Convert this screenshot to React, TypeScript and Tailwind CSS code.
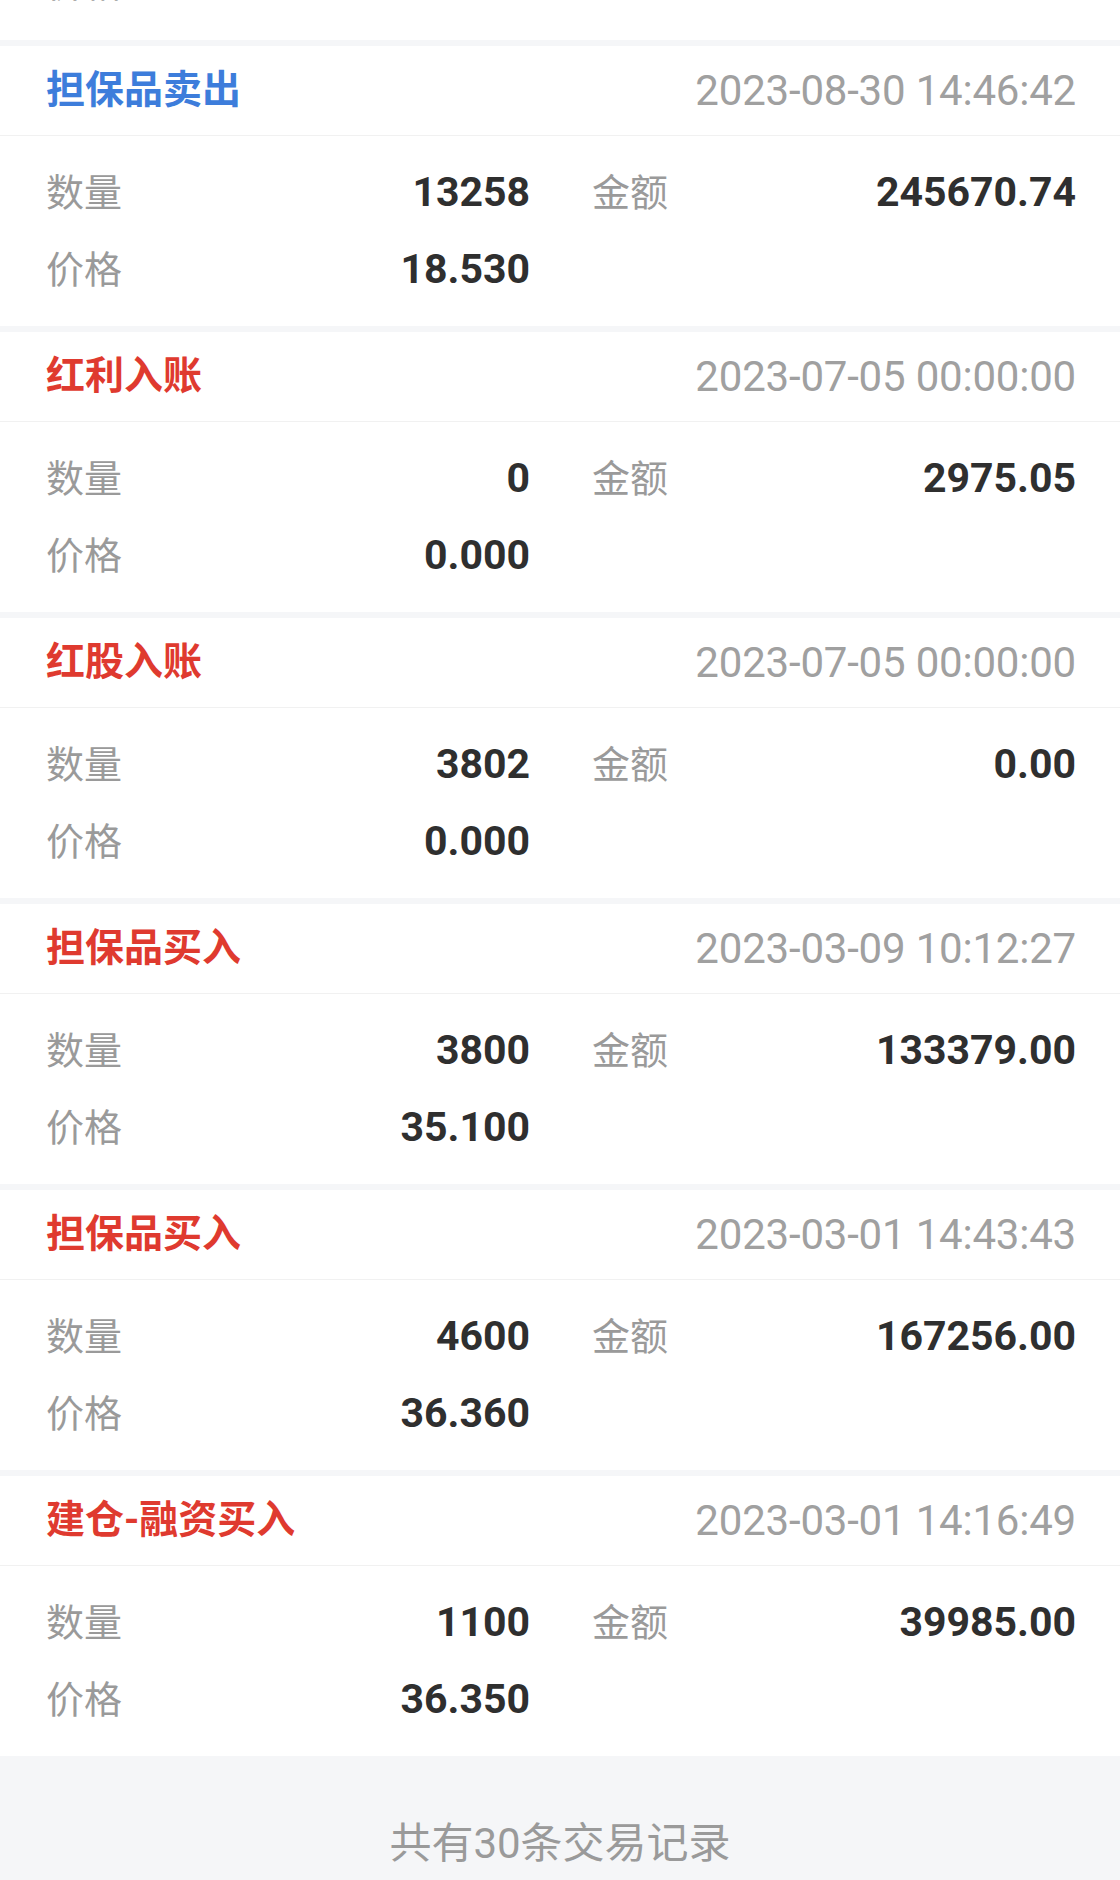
const records = [
  { title: "担保品买入", tone: "red", time: "2023-09-01 09:30:00", qty: "1000", amount: "18530.00", price: "18.530" },
  { title: "担保品卖出", tone: "blue", time: "2023-08-30 14:46:42", qty: "13258", amount: "245670.74", price: "18.530" },
  { title: "红利入账", tone: "red", time: "2023-07-05 00:00:00", qty: "0", amount: "2975.05", price: "0.000" },
  { title: "红股入账", tone: "red", time: "2023-07-05 00:00:00", qty: "3802", amount: "0.00", price: "0.000" },
  { title: "担保品买入", tone: "red", time: "2023-03-09 10:12:27", qty: "3800", amount: "133379.00", price: "35.100" },
  { title: "担保品买入", tone: "red", time: "2023-03-01 14:43:43", qty: "4600", amount: "167256.00", price: "36.360" },
  { title: "建仓-融资买入", tone: "red", time: "2023-03-01 14:16:49", qty: "1100", amount: "39985.00", price: "36.350" },
];

const cjk = "font-['Roboto','Noto_Sans_CJK_SC',sans-serif]";

function Field({ label, value }: { label: string; value: string }) {
  return (
    <div className="flex h-[77px] items-center justify-between">
      <span className="text-[38px] leading-none text-[#9a9a9a]">{label}</span>
      <span className="text-[41px] font-bold leading-none text-[#2f2f2f]">{value}</span>
    </div>
  );
}

function RecordCard({ r }: { r: (typeof records)[number] }) {
  return (
    <section className="bg-white">
      <header className="flex h-[90px] items-center justify-between border-b border-[#f1f1f1] pl-[46px] pr-[44px]">
        <span className={`text-[39px] font-bold leading-none ${r.tone === "blue" ? "text-[#3d7ddb]" : "text-[#df3a2f]"}`}>
          {r.title}
        </span>
        <span className="text-[42px] leading-none tracking-[-0.2px] text-[#a0a0a0]">{r.time}</span>
      </header>
      <div className="grid grid-cols-2 gap-x-[62px] pl-[46px] pr-[44px] py-[18px]">
        <Field label="数量" value={r.qty} />
        <Field label="金额" value={r.amount} />
        <Field label="价格" value={r.price} />
        <div />
      </div>
    </section>
  );
}

export default function App() {
  return (
    <div className={`h-[1880px] w-[1120px] overflow-hidden bg-[#f5f6f8] ${cjk}`}>
      <div className="-mt-[240px] flex flex-col gap-[6px]">
        {records.map((r, i) => (
          <RecordCard key={i} r={r} />
        ))}
      </div>
      <footer className="flex justify-center pt-[63px] pb-[40px]">
        <span className="text-[42px] leading-[50px] text-[#9a9a9a]">共有30条交易记录</span>
      </footer>
    </div>
  );
}
